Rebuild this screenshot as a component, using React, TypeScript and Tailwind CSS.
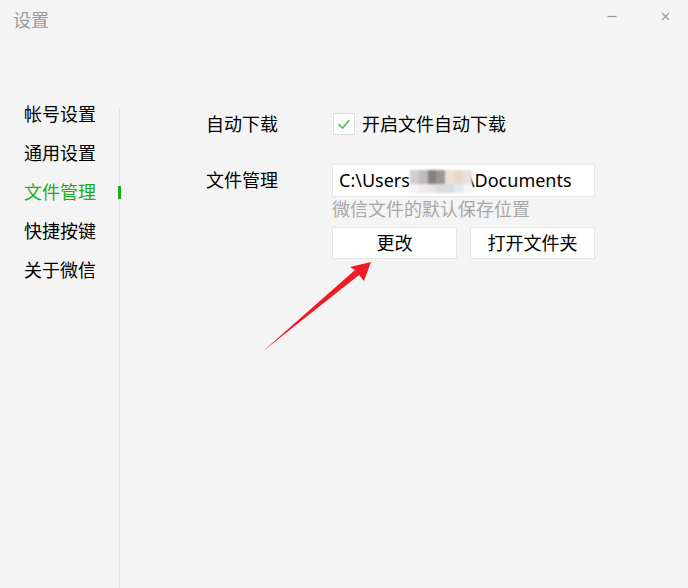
const menu = ["帐号设置", "通用设置", "文件管理", "快捷按键", "关于微信"];
const active = "文件管理";

const font = { fontFamily: '"Noto Sans", "Noto Sans CJK SC", sans-serif' };

function WindowButtons() {
  return (
    <div className="flex items-start self-start gap-[44px] pr-[18px] pt-[12px]">
      <svg width="10" height="10" viewBox="0 0 10 10">
        <path d="M0.5 4.5h9" stroke="#9a9a9a" strokeWidth="1.2" />
      </svg>
      <svg width="9" height="9" viewBox="0 0 9 9">
        <path d="M1 1l7 7M8 1L1 8" stroke="#9a9a9a" strokeWidth="1.1" />
      </svg>
    </div>
  );
}

// mosaic over the user name in the path
function Masked() {
  const top = ["#cfcfcf", "#bdbaba", "#8a7f7a", "#9c9693", "#ece0d2", "#e6d8cb", "#e9e2da"];
  const bottom = ["#f3f3f3", "#ececec", "#e6e6e6", "#dcdcdc", "#d5dbe2", "#e1e8f0", "#f3f3f3"];
  return (
    <span className="inline-flex flex-col w-[62px] h-[26px] overflow-hidden align-middle blur-[0.8px]">
      <span className="flex h-[14px] mt-[2px]">
        {top.map((c, i) => (
          <span key={i} className="flex-1" style={{ background: c }} />
        ))}
      </span>
      <span className="flex h-[9px]">
        {bottom.map((c, i) => (
          <span key={i} className="flex-1" style={{ background: c }} />
        ))}
      </span>
    </span>
  );
}

export default function App() {
  return (
    <div className="relative w-[688px] h-[588px] bg-[#f4f4f4] text-[18px] text-black flex flex-col overflow-hidden" style={font}>
      {/* title bar */}
      <div className="flex justify-between h-[95px]">
        <div className="pl-[13px] pt-[7px] text-[#9a9a9a] leading-[26px]">设置</div>
        <WindowButtons />
      </div>

      <div className="flex flex-1">
        {/* sidebar */}
        <div className="flex">
          <div className="w-[119px] flex flex-col">
            {menu.map((m) => (
              <div key={m} className={`relative h-[39px] leading-[39px] pl-[24px] ${m === active ? "text-[#1aad19]" : ""}`}>
                {m}
                {m === active && <span className="absolute right-[-2px] top-[13px] w-[3px] h-[13px] bg-[#1aad19]" />}
              </div>
            ))}
          </div>
          <div className="w-px bg-[#e2e2e2] mt-[13px]" />
        </div>

        {/* content */}
        <div className="pl-[86px] pt-[18px] flex flex-col">
          <div className="flex items-center h-[22px]">
            <div className="w-[127px] leading-[22px]">自动下载</div>
            <div className="w-[22px] h-[22px] border border-[#dcdcdc] bg-white flex items-center justify-center">
              <svg width="14" height="12" viewBox="0 0 14 12">
                <path d="M1.5 6l4 4L12.5 2" fill="none" stroke="#4fc25a" strokeWidth="1.6" />
              </svg>
            </div>
            <div className="ml-[7px] leading-[22px]">开启文件自动下载</div>
          </div>

          <div className="flex mt-[29px]">
            <div className="w-[126px] leading-[33px]">文件管理</div>
            <div className="flex flex-col">
              <div className="w-[263px] h-[33px] bg-white border border-[#e6e6e6] pl-[6px] flex items-center whitespace-nowrap">
                <span>C:\Users</span>
                <Masked />
                <span className="ml-[-4px]">\Documents</span>
              </div>
              <div className="leading-[24px] text-[#a8a8a8]">微信文件的默认保存位置</div>
              <div className="flex gap-[13px] mt-[6px]">
                <button className="w-[125px] h-[32px] bg-white border border-[#e6e6e6] leading-[30px]">更改</button>
                <button className="w-[125px] h-[32px] bg-white border border-[#e6e6e6] leading-[30px]">打开文件夹</button>
              </div>
            </div>
          </div>
        </div>
      </div>

      {/* red annotation arrow */}
      <svg className="absolute left-0 top-0 pointer-events-none" width="688" height="588">
        <polygon points="262,352 355,270 350,267 371,262 364,281 359,275" fill="#ee1c25" />
      </svg>
    </div>
  );
}
